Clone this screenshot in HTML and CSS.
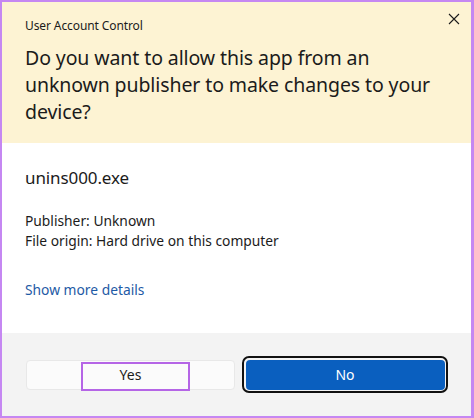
FILE: index.html
```html
<!DOCTYPE html>
<html lang="en">
<head>
<meta charset="utf-8">
<title>User Account Control</title>
<link rel="stylesheet" href="styles.css">
</head>
<body>
<div class="frame">
  <div class="dialog">
    <header class="head">
      <div class="titlebar">
        <span class="title">User Account Control</span>
        <svg class="close" width="12" height="12" viewBox="0 0 12 12"><path d="M1 1L11 11M11 1L1 11" stroke="#1b1b1b" stroke-width="1.1" fill="none"/></svg>
      </div>
      <h1 class="question">Do you want to allow this app from an unknown publisher to make changes to your device?</h1>
    </header>
    <main class="body">
      <div class="app">unins000.exe</div>
      <div class="meta">
        <div>Publisher: Unknown</div>
        <div>File origin: Hard drive on this computer</div>
      </div>
      <a class="more" href="#">Show more details</a>
    </main>
    <footer class="foot">
      <button class="btn yes">Yes</button>
      <div class="focus"><button class="btn no">No</button></div>
    </footer>
  </div>
</div>
</body>
</html>
```
FILE: styles.css
```css
html, body { margin: 0; padding: 0; }
body { width: 474px; height: 418px; background: #c587f2; font-family: "Noto Sans", "Open Sans", sans-serif; color: #1b1b1b; }
.frame { box-sizing: border-box; width: 474px; height: 418px; padding: 2px 3px 2px 2px; }
.dialog { height: 100%; display: flex; flex-direction: column; background: #fff; }
.head { background: #fdf3d3; height: 141px; box-sizing: border-box; padding: 0 0 0 23px; }
.titlebar { display: flex; justify-content: space-between; align-items: center; height: 36px; padding-top: 2px; box-sizing: border-box; }
.title { font-size: 12px; padding-top: 8px; letter-spacing: -0.1px; }
.close { margin-right: 11px; margin-top: -4px; }
.question { margin: 6px 0 0; font-size: 19.5px; font-weight: 400; line-height: 27px; letter-spacing: -0.1px; padding-right: 40px; }
.body { flex: 1; padding: 23px 23px 0; }
.app { font-size: 17px; line-height: 24px; letter-spacing: -0.1px; }
.meta { margin-top: 21px; font-size: 13.8px; line-height: 20px; }
.more { display: block; margin-top: 29px; font-size: 13.8px; color: #1e5aa5; text-decoration: none; }
.foot { height: 83px; background: #f3f3f3; display: flex; align-items: center; padding: 0 23px 0 24px; gap: 7px; box-sizing: border-box; }
.btn { font-family: inherit; font-size: 14px; height: 30px; border-radius: 4px; cursor: pointer; }
.yes { position: relative; flex: 0 0 209px; background: #fbfbfb; border: 1px solid #e8e8e8; color: #1b1b1b; padding: 0; }
.yes::after { content: ""; position: absolute; left: 54px; top: 1px; width: 105px; height: 25px; border: 2px solid #b565e6; }
.focus { flex: 1; border: 2.5px solid #111; border-radius: 7px; padding: 1.5px; display: flex; }
.no { flex: 1; background: #0a5fbf; border: none; color: #fff; }
```
